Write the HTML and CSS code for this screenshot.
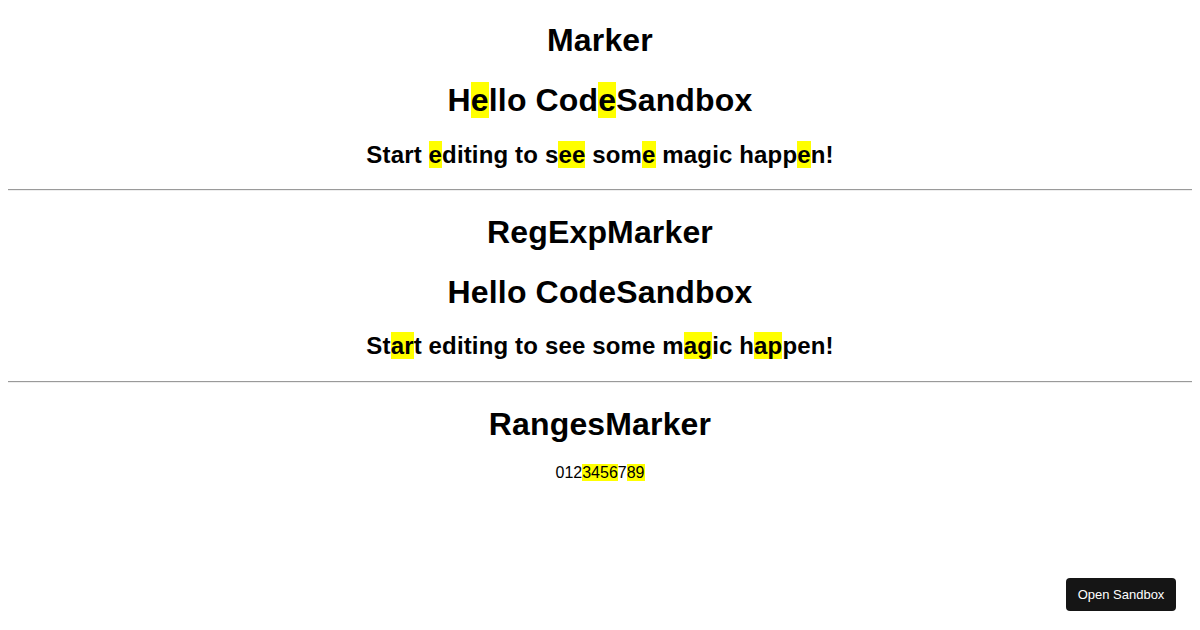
FILE: index.html
```html
<!DOCTYPE html>
<html>
<head>
<meta charset="utf-8">
<link rel="stylesheet" href="styles.css">
</head>
<body>
<div class="app">
  <h1 class="first">Marker</h1>
  <h1>H<mark>e</mark>llo Cod<mark>e</mark>Sandbox</h1>
  <h2>Start <mark>e</mark>diting to s<mark>ee</mark> som<mark>e</mark> magic happ<mark>e</mark>n!</h2>
  <hr>
  <h1>RegExpMarker</h1>
  <h1>Hello CodeSandbox</h1>
  <h2>St<mark>ar</mark>t editing to see some m<mark>ag</mark>ic h<mark>ap</mark>pen!</h2>
  <hr>
  <h1>RangesMarker</h1>
  <div class="digits">012<mark>3456</mark>7<mark>89</mark></div>
</div>
<a class="open-sandbox">Open Sandbox</a>
</body>
</html>
```
FILE: styles.css
```css
body {
  margin: 8px;
  font-family: "Liberation Sans", Arial, sans-serif;
  background: #fff;
  color: #000;
}
.app {
  text-align: center;
}
h1 {
  font-size: 32px;
  line-height: 1.2;
  letter-spacing: 0.15px;
  margin: 21.44px 0;
}
h1.first {
  margin-top: 13px;
}
h2 {
  font-size: 24px;
  line-height: 1.2;
  letter-spacing: 0.15px;
  margin: 19.92px 0;
}
mark {
  background: #ffff00;
  color: #000;
}
hr {
  border: 0;
  border-top: 1px solid #9a9a9a;
  border-bottom: 1px solid #eeeeee;
  margin: 8px 0;
}
.digits {
  font-size: 16px;
}
.open-sandbox {
  position: fixed;
  right: 24px;
  bottom: 19px;
  width: 110px;
  height: 33px;
  box-sizing: border-box;
  background: #151515;
  color: #fff;
  border-radius: 4px;
  font-size: 13px;
  display: flex;
  align-items: center;
  justify-content: center;
}
```
